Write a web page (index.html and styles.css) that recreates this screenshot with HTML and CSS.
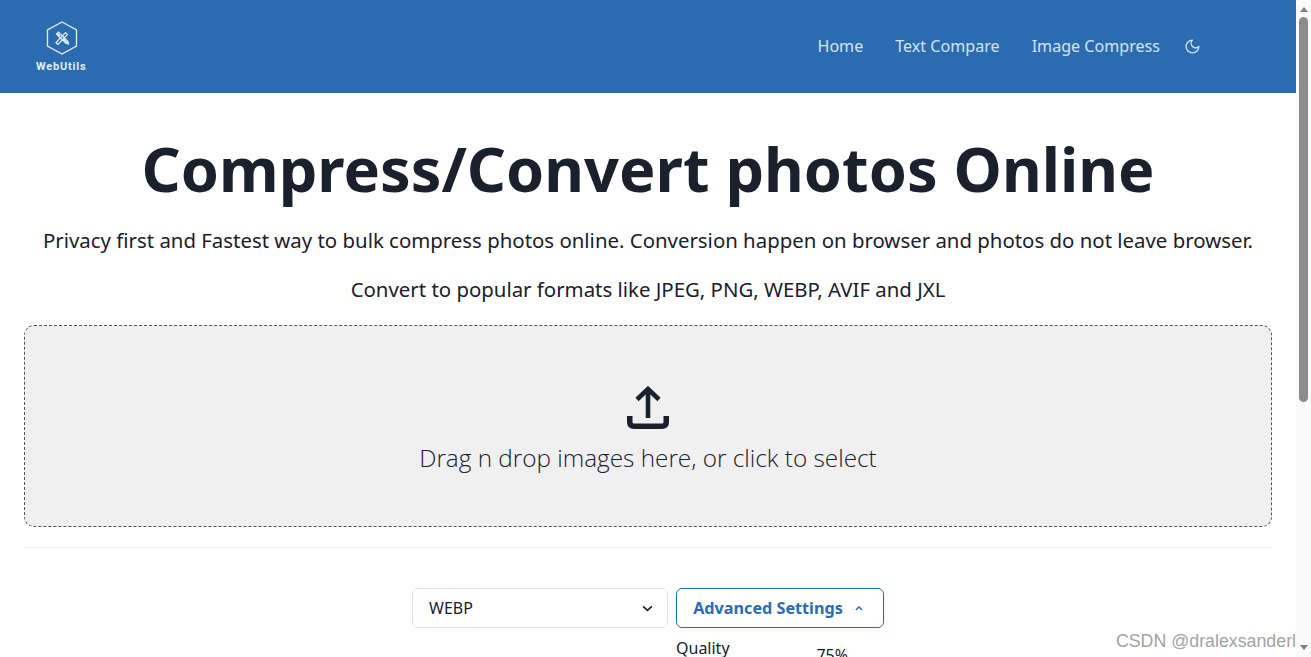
FILE: index.html
```html
<!DOCTYPE html>
<html>
<head>
    <title>WebUtils - Compress/Convert photos Online</title>
    <link rel="stylesheet" href="styles.css">
</head>
<body>
    <div class="page">
        <div class="content">
            <!-- header -->
            <header class="header">
                <a class="logo" href="#">
                    <svg class="logo-icon" viewBox="0 0 32 34" width="32" height="34" fill="none" stroke="currentColor">
                        <path d="M16 1 30.500 9V25L16 33 1.500 25V9Z" stroke-width="1.3"/>
                        <path d="M10.500 13 12.500 11 22 20.500 22.500 23 20 22.500ZM12 23.500 10 21.500 19.500 11.500 21.500 13.500ZM17.500 18 21.500 22M14 15 11.500 12.500" stroke-width="1.200"/>
                    </svg>
                    <span class="logo-text">WebUtils</span>
                </a>
                <nav class="nav">
                    <a href="#">Home</a>
                    <a href="#">Text Compare</a>
                    <a href="#">Image Compress</a>
                    <svg class="moon" viewBox="0 0 24 24" width="17" height="17" fill="none" stroke="currentColor" stroke-width="1.900" stroke-linecap="round" stroke-linejoin="round">
                        <path d="M12 3a6 6 0 0 0 9 9 9 9 0 1 1-9-9Z"/>
                    </svg>
                </nav>
            </header>

            <!-- main -->
            <main class="main">
                <h1 class="title">Compress/Convert photos Online</h1>
                <p class="lead">Privacy first and Fastest way to bulk compress photos online. Conversion happen on browser and photos do not leave browser.</p>
                <p class="lead">Convert to popular formats like JPEG, PNG, WEBP, AVIF and JXL</p>

                <div class="dropzone">
                    <svg class="upload" viewBox="0 0 44 44" width="44" height="44" fill="none" stroke="currentColor">
                        <path d="M22 32V4M11 13.500 22 3 33 13.500" stroke-width="4.600"/>
                        <path d="M3.750 30V36Q3.750 40.250 8 40.250H36Q40.250 40.250 40.250 36V30" stroke-width="5.500"/>
                    </svg>
                    <p class="dropzone-text">Drag n drop images here, or click to select</p>
                </div>

                <hr class="divider">

                <div class="controls">
                    <div class="format-select">
                        <span>WEBP</span>
                        <svg viewBox="0 0 12 8" width="11" height="7" fill="none" stroke="currentColor" stroke-width="1.900">
                            <path d="M1 1.500 6 6.200l5-4.700"/>
                        </svg>
                    </div>
                    <div class="settings">
                        <button class="settings-btn">
                            Advanced Settings
                            <svg viewBox="0 0 10 6" width="8" height="5" fill="none" stroke="currentColor" stroke-width="1.700">
                                <path d="M1 5 5 1l4 4"/>
                            </svg>
                        </button>
                        <div class="quality">
                            <span>Quality</span>
                            <span class="quality-value">75%</span>
                        </div>
                    </div>
                </div>
            </main>
            <div class="watermark">CSDN @dralexsanderl</div>
        </div>

        <!-- scrollbar -->
        <div class="scrollbar">
            <div class="scrollbar-up"></div>
            <div class="scrollbar-thumb"></div>
            <div class="scrollbar-down"></div>
        </div>
    </div>
</body>
</html>
```

FILE: styles.css
```css
/* page */
html, body {
    height: 100%;
}

body {
    margin: 0;
    background-color: #FFFFFF;
    color: #1A202C;
    font-family: "Noto Sans", "Open Sans", Arial, sans-serif;
    overflow: hidden;
}

.page {
    display: flex;
    height: 657px;
    overflow: hidden;
}

.content {
    position: relative;
    flex: 1;
    min-width: 0;
}

/* header */
.header {
    display: flex;
    justify-content: space-between;
    align-items: flex-start;
    height: 93px;
    padding: 0 95px 0 36px;
    background-color: #2B6CB0;
    box-sizing: border-box;
}

.logo {
    display: flex;
    flex-direction: column;
    align-items: center;
    padding-top: 21px;
    color: #E6EDF5;
    text-decoration: none;
}

.logo-icon {
    display: block;
    margin-left: 1px;
}

.logo-text {
    margin-top: 5px;
    font-family: Roboto, Arial, sans-serif;
    font-size: 11px;
    font-weight: 700;
    letter-spacing: 0.8px;
}

.nav {
    display: flex;
    align-items: center;
    gap: 32px;
    height: 92px;
    color: #D6E4F2;
    font-size: 16.1px;
}

.nav a {
    color: #D6E4F2;
    text-decoration: none;
}

.moon {
    margin-left: -8px;
}

/* main */
.main {
    padding: 0 24px;
}

.title {
    margin: 40px 0 0;
    font-size: 61.2px;
    line-height: 72px;
    font-weight: 700;
    text-align: center;
    white-space: nowrap;
}

.lead {
    margin: 21px 0 0;
    font-size: 20.4px;
    line-height: 28px;
    text-align: center;
    white-space: nowrap;
}

.lead + .lead {
    margin-top: 21px;
}

.dropzone {
    display: flex;
    flex-direction: column;
    align-items: center;
    height: 202px;
    margin-top: 22px;
    padding-top: 60px;
    box-sizing: border-box;
    background-color: #F0F0F0;
    border: 1px dashed #555555;
    border-radius: 10px;
}

.upload {
    display: block;
}

.dropzone-text {
    margin: 12px 0 0;
    font-family: "Open Sans", "Noto Sans", sans-serif;
    font-size: 24.3px;
    line-height: 32px;
    font-weight: 300;
    color: #1A202C;
    white-space: nowrap;
}

.divider {
    height: 1px;
    margin: 20px 0 0;
    border: none;
    background-color: #EBEEF2;
}

/* controls */
.controls {
    display: flex;
    justify-content: center;
    align-items: flex-start;
    gap: 8px;
    margin-top: 40px;
}

.format-select {
    display: flex;
    justify-content: space-between;
    align-items: center;
    width: 256px;
    height: 40px;
    padding: 0 14px 0 16px;
    box-sizing: border-box;
    border: 1px solid #E2E8F0;
    border-radius: 6px;
    font-size: 16px;
}

.settings {
    width: 208px;
}

.settings-btn {
    display: flex;
    justify-content: center;
    align-items: center;
    gap: 12px;
    width: 100%;
    height: 40px;
    padding: 0 4px 0 0;
    background: none;
    border: 1px solid #2B6CB0;
    border-radius: 6px;
    color: #2B6CB0;
    font-family: inherit;
    font-size: 16.2px;
    font-weight: 700;
    white-space: nowrap;
}

.quality {
    display: flex;
    justify-content: space-between;
    padding: 8px 36px 0 0;
    font-size: 16px;
    line-height: 24px;
}

.quality-value {
    margin-top: 7px;
}

/* screenshot watermark */
.watermark {
    position: absolute;
    right: 0;
    bottom: 5px;
    font-family: "Liberation Sans", Arial, sans-serif;
    font-size: 17.8px;
    color: #A3A3A3;
    white-space: nowrap;
}

/* scrollbar */
.scrollbar {
    display: flex;
    flex-direction: column;
    align-items: center;
    width: 15px;
    height: 100%;
    padding-top: 7px;
    box-sizing: border-box;
    background-color: #FAFAFA;
}

.scrollbar-up,
.scrollbar-down {
    width: 0;
    height: 0;
    border-left: 4px solid transparent;
    border-right: 4px solid transparent;
}

.scrollbar-up {
    border-bottom: 5px solid #808080;
}

.scrollbar-down {
    margin-top: 243px;
    border-top: 5px solid #808080;
}

.scrollbar-thumb {
    width: 9px;
    height: 385px;
    margin-top: 5px;
    border-radius: 5px;
    background-color: #8C8C8C;
}
```
